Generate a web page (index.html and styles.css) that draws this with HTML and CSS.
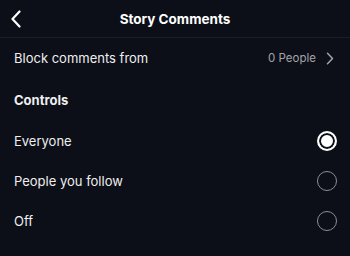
FILE: index.html
```html
<!DOCTYPE html>
<html>
<head>
<meta charset="utf-8">
<link rel="stylesheet" href="styles.css">
</head>
<body>
<div class="screen">
  <header class="header">
    <svg class="back" width="12" height="18" viewBox="0 0 12 18"><path d="M9.5 1.5 L2.5 9 L9.5 16.5" fill="none" stroke="#fff" stroke-width="2.2" stroke-linecap="round" stroke-linejoin="round"/></svg>
    <div class="title">Story Comments</div>
  </header>
  <div class="row link">
    <span class="label">Block comments from</span>
    <span class="value">0 People
      <svg class="chev" width="8" height="13" viewBox="0 0 8 13"><path d="M1.5 1.2 L6.5 6.5 L1.5 11.8" fill="none" stroke="#a3a4aa" stroke-width="1.5" stroke-linecap="round" stroke-linejoin="round"/></svg>
    </span>
  </div>
  <div class="section">Controls</div>
  <div class="row option"><span class="label">Everyone</span><span class="radio on"></span></div>
  <div class="row option"><span class="label">People you follow</span><span class="radio"></span></div>
  <div class="row option"><span class="label">Off</span><span class="radio"></span></div>
</div>
</body>
</html>
```
FILE: styles.css
```css
html, body { margin: 0; padding: 0; background: #0c0f17; }
body { font-family: Inter, "Noto Sans", sans-serif; color: #eeeef0; }
.screen { width: 350px; height: 256px; background: #0c0f17; }
.header { height: 37px; border-bottom: 1px solid #1a1e28; display: flex; align-items: center; justify-content: center; position: relative; }
.back { position: absolute; left: 10px; top: 10px; }
.title { font-weight: 700; font-size: 13.5px; color: #fff; }
.row { display: flex; align-items: center; justify-content: space-between; padding: 0 14px; height: 40px; }
.label { font-size: 13px; }
.value { font-size: 11.5px; color: #a3a4aa; display: flex; align-items: center; gap: 10px; }
.chev { margin-right: 2px; }
.section { font-weight: 700; font-size: 13px; padding: 0 14px; height: 43px; display: flex; align-items: center; }
.option { height: 40px; }
.radio { width: 20px; height: 20px; border-radius: 50%; border: 1.5px solid #8d8e94; box-sizing: border-box; margin-right: -1px; margin-top: -1px; }
.radio.on { border: 2px solid #fff; background: #fff; box-shadow: inset 0 0 0 2px #0c0f17; }
```
